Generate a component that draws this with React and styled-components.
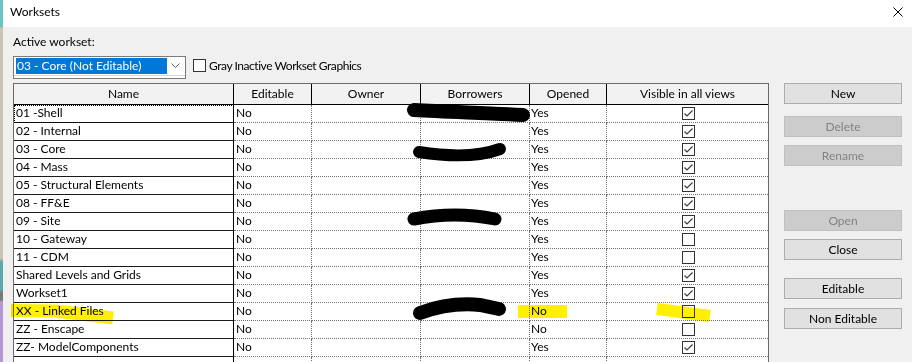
import React from 'react';
import styled, { createGlobalStyle } from 'styled-components';

const Global = createGlobalStyle`
  html, body { margin: 0; padding: 0; background: #f0f0f0; }
  body {
    font-family: Lato, "Liberation Sans", Arial, sans-serif;
    font-size: 12px;
    color: #000;
  }
  * { box-sizing: border-box; }
`;

const Screen = styled.div`
  position: relative;
  width: 912px;
  height: 362px;
  overflow: hidden;
  display: flex;
`;

const BehindStrip = styled.div`
  width: 3px;
  flex: none;
  background: linear-gradient(
    to bottom,
    #6cc3c6 0px, #6cc3c6 27px,
    #cbc5b0 28px, #cbc5b0 258px,
    #5da8ab 262px, #5da8ab 290px,
    #7a7a7a 292px, #7a7a7a 300px,
    #b597d6 302px, #b597d6 100%
  );
`;

const Dialog = styled.div`
  flex: 1;
  display: flex;
  flex-direction: column;
  background: #f0f0f0;
  min-width: 0;
`;

const TitleBar = styled.div`
  height: 27px;
  flex: none;
  background: #fff;
  display: flex;
  align-items: center;
  justify-content: space-between;
  padding: 0 9px 3px 7px;
`;

const TitleText = styled.span`
  line-height: 14px;
`;

const Body = styled.div`
  padding: 8px 10px 0 10px;
  display: flex;
  flex-direction: column;
`;

const FieldLabel = styled.div`
  line-height: 14px;
  height: 14px;
`;

const ControlsRow = styled.div`
  margin-top: 7px;
  display: flex;
  align-items: flex-start;
`;

const Combo = styled.div`
  width: 173px;
  height: 23px;
  border: 1px solid #7a7a7a;
  background: #fff;
  padding: 1px 2px;
  display: flex;
  align-items: flex-start;
  box-shadow: inset 0 -2px 0 #fff, inset 0 -3px 0 #d9d9d9;
`;

const ComboValue = styled.div`
  width: 151px;
  height: 16px;
  background: #0078d7;
  color: #fff;
  line-height: 16px;
  padding-left: 1px;
  white-space: nowrap;
`;

const ComboArrow = styled.div`
  flex: 1;
  display: flex;
  justify-content: center;
  padding-top: 5px;
`;

const CheckLabel = styled.label`
  display: flex;
  align-items: center;
  margin-left: 7px;
  margin-top: 3px;
  line-height: 13px;
  gap: 3px;
`;

const CheckText = styled.span`
  letter-spacing: -0.45px;
`;

const Box = styled.span`
  width: 13px;
  height: 13px;
  border: 1px solid #333;
  background: #fff;
  display: inline-flex;
  align-items: center;
  justify-content: center;
  flex: none;
`;

const MainRow = styled.div`
  margin-top: 4px;
  display: flex;
  align-items: flex-start;
  gap: 15px;
`;

const Grid = styled.div`
  width: 756px;
  border: 1px solid #6b6b6b;
  border-bottom: none;
  display: grid;
  grid-template-columns: 220px 78px 109px 109px 77px 161px;
  grid-template-rows: 21px;
  grid-auto-rows: 18px;
  background: #fff;
`;

const HeadCell = styled.div`
  background: #f2f2f2;
  border-bottom: 1px solid #000;
  border-right: ${(p) => (p.$last ? 'none' : '1px solid #000')};
  text-align: center;
  line-height: 19px;
  white-space: nowrap;
`;

const NameCell = styled.div`
  border-right: 1px solid #000;
  border-bottom: 1px solid #1a1a1a;
  padding-left: 2px;
  line-height: 16px;
  white-space: nowrap;
  background: #fff;
  outline: ${(p) => (p.$focus ? '1px dotted #000' : 'none')};
  outline-offset: -1px;
`;

const DataCell = styled.div`
  border-right: ${(p) => (p.$last ? 'none' : '1px dotted #707070')};
  border-bottom: 1px dotted #707070;
  padding-left: ${(p) => (p.$tight ? '1px' : '2px')};
  padding-top: ${(p) => (p.$center ? '2px' : '0')};
  line-height: 16px;
  white-space: nowrap;
  display: flex;
  align-items: flex-start;
  justify-content: ${(p) => (p.$center ? 'center' : 'flex-start')};
`;

const ButtonCol = styled.div`
  display: flex;
  flex-direction: column;
  width: 118px;
`;

const Button = styled.button`
  width: 118px;
  height: 21px;
  margin: ${(p) => p.$gap || 0}px 0 0 0;
  padding: 0;
  border: 1px solid ${(p) => (p.disabled ? '#bfbfbf' : '#adadad')};
  background: ${(p) => (p.disabled ? '#cccccc' : '#e1e1e1')};
  color: ${(p) => (p.disabled ? '#838383' : '#000')};
  font: inherit;
  line-height: 19px;
  text-align: center;
`;

const Overlay = styled.svg`
  position: absolute;
  left: 0;
  top: 0;
  pointer-events: none;
`;

const Marker = styled.g`
  mix-blend-mode: multiply;
`;

const Check = () => (
  <svg width="11" height="11" viewBox="0 0 11 11">
    <path d="M1.5 5.5 L4 8 L9.5 2.5" fill="none" stroke="#3c3c3c" strokeWidth="1.2" />
  </svg>
);

const CloseIcon = () => (
  <svg width="10" height="10" viewBox="0 0 10 10">
    <path d="M0.5 0.5 L9.5 9.5 M9.5 0.5 L0.5 9.5" stroke="#000" strokeWidth="1" />
  </svg>
);

const Chevron = () => (
  <svg width="9" height="6" viewBox="0 0 9 6">
    <path d="M0.5 0.5 L4.5 4.5 L8.5 0.5" fill="none" stroke="#606060" strokeWidth="1" />
  </svg>
);

const headers = ['Name', 'Editable', 'Owner', 'Borrowers', 'Opened', 'Visible in all views'];

const rows = [
  ['01 -Shell', 'Yes', true],
  ['02 - Internal', 'Yes', true],
  ['03 - Core', 'Yes', true],
  ['04 - Mass', 'Yes', true],
  ['05 - Structural Elements', 'Yes', true],
  ['08 - FF&E', 'Yes', true],
  ['09 - Site', 'Yes', true],
  ['10 - Gateway', 'Yes', false],
  ['11 - CDM', 'Yes', false],
  ['Shared Levels and Grids', 'Yes', true],
  ['Workset1', 'Yes', true],
  ['XX - Linked Files', 'No', false],
  ['ZZ - Enscape', 'No', false],
  ['ZZ- ModelComponents', 'Yes', true],
];

const buttons = [
  { label: 'New', gap: 0 },
  { label: 'Delete', gap: 12, disabled: true },
  { label: 'Rename', gap: 8, disabled: true },
  { label: 'Open', gap: 44, disabled: true },
  { label: 'Close', gap: 8 },
  { label: 'Editable', gap: 18 },
  { label: 'Non Editable', gap: 9 },
];

export default function App() {
  return (
    <>
      <Global />
      <Screen>
        <BehindStrip />
        <Dialog>
          <TitleBar>
            <TitleText>Worksets</TitleText>
            <CloseIcon />
          </TitleBar>
          <Body>
            <FieldLabel>Active workset:</FieldLabel>
            <ControlsRow>
              <Combo>
                <ComboValue>03 - Core (Not Editable)</ComboValue>
                <ComboArrow>
                  <Chevron />
                </ComboArrow>
              </Combo>
              <CheckLabel>
                <Box />
                <CheckText>Gray Inactive Workset Graphics</CheckText>
              </CheckLabel>
            </ControlsRow>
            <MainRow>
              <Grid>
                {headers.map((h, i) => (
                  <HeadCell key={h} $last={i === headers.length - 1}>
                    {h}
                  </HeadCell>
                ))}
                {rows.map(([name, opened, visible], i) => (
                  <React.Fragment key={name}>
                    <NameCell $focus={i === 0}>{name}</NameCell>
                    <DataCell>No</DataCell>
                    <DataCell />
                    <DataCell />
                    <DataCell $tight>{opened}</DataCell>
                    <DataCell $center $last>
                      <Box>{visible ? <Check /> : null}</Box>
                    </DataCell>
                  </React.Fragment>
                ))}
                <NameCell />
                <DataCell />
                <DataCell />
                <DataCell />
                <DataCell />
                <DataCell $last />
              </Grid>
              <ButtonCol>
                {buttons.map((b) => (
                  <Button key={b.label} $gap={b.gap} disabled={b.disabled}>
                    {b.label}
                  </Button>
                ))}
              </ButtonCol>
            </MainRow>
          </Body>
        </Dialog>
        <Overlay width="912" height="362" viewBox="0 0 912 362">
          <Marker>
            <path d="M11 310.5 L55 311 L113 318" fill="none" stroke="#fff000" strokeWidth="13" />
            <path d="M518 311.5 L567 311.5" fill="none" stroke="#fff000" strokeWidth="13" />
            <path d="M657 309 L710 316" fill="none" stroke="#fff000" strokeWidth="12" />
          </Marker>
          <g fill="none" stroke="#000" strokeLinecap="round">
            <path d="M414 110 C 450 112, 490 113, 523 115" strokeWidth="14" />
            <path d="M419 152 Q 470 160 500 149" strokeWidth="12" />
            <path d="M414 219 Q 455 211 495 219" strokeWidth="13" />
            <path d="M420 313 Q 450 302 480 305 L 499 309" strokeWidth="14" />
          </g>
        </Overlay>
      </Screen>
    </>
  );
}
